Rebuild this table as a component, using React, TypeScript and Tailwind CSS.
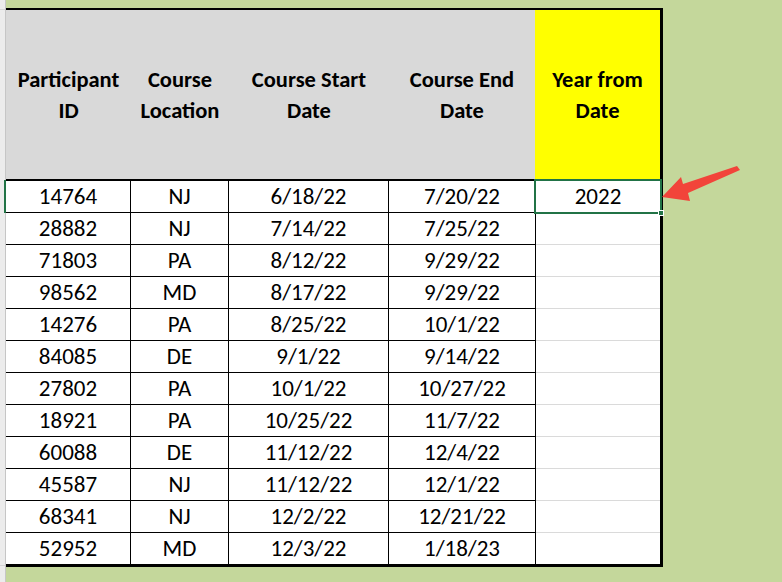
import React from 'react';

const rows: [string, string, string, string][] = [
  ['14764', 'NJ', '6/18/22', '7/20/22'],
  ['28882', 'NJ', '7/14/22', '7/25/22'],
  ['71803', 'PA', '8/12/22', '9/29/22'],
  ['98562', 'MD', '8/17/22', '9/29/22'],
  ['14276', 'PA', '8/25/22', '10/1/22'],
  ['84085', 'DE', '9/1/22', '9/14/22'],
  ['27802', 'PA', '10/1/22', '10/27/22'],
  ['18921', 'PA', '10/25/22', '11/7/22'],
  ['60088', 'DE', '11/12/22', '12/4/22'],
  ['45587', 'NJ', '11/12/22', '12/1/22'],
  ['68341', 'NJ', '12/2/22', '12/21/22'],
  ['52952', 'MD', '12/3/22', '1/18/23'],
];

const font = { fontFamily: 'Carlito, Lato, "Open Sans", sans-serif' };

export default function App() {
  return (
    <div
      className="relative flex h-[582px] w-[782px] overflow-hidden bg-[#c4d79b] text-black"
      style={font}
    >
      {/* excel row-header strip */}
      <div className="relative w-[6px] shrink-0 border-r border-[#c6c6c6] bg-[#ececec]">
        <div className="absolute left-0 top-[9px] h-px w-[5px] bg-[#d4d4d4]" />
        <div className="absolute left-[4px] top-[180px] h-[33px] w-[2px] bg-[#217346]" />
        <div className="absolute left-0 top-[565px] h-px w-[5px] bg-[#d4d4d4]" />
      </div>

      <div className="pt-[8px]">
        <div className="relative w-[657px] border-t-2 border-r-[3px] border-b-[3px] border-black bg-white">
          {/* header */}
          <div className="flex h-[171px] border-b-2 border-black text-[22.5px] font-bold leading-[31px]">
            <div className="flex w-[125px] items-center justify-center bg-[#d9d9d9] text-center">
              Participant<br />ID
            </div>
            <div className="flex w-[98px] items-center justify-center bg-[#d9d9d9] text-center">
              Course<br />Location
            </div>
            <div className="flex w-[160px] items-center justify-center bg-[#d9d9d9] text-center">
              Course Start<br />Date
            </div>
            <div className="flex w-[146px] items-center justify-center bg-[#d9d9d9] text-center">
              Course End<br />Date
            </div>
            <div className="flex w-[125px] items-center justify-center bg-[#ffff00] text-center">
              Year from<br />Date
            </div>
          </div>

          {/* body */}
          {rows.map((r, i) => {
            const last = i === rows.length - 1;
            return (
              <div key={i} className="flex text-[23px] leading-none">
                {r.map((v, j) => (
                  <div
                    key={j}
                    className={`flex items-center justify-center border-r border-black ${
                      last ? 'h-[31px]' : 'h-[32px] border-b'
                    } ${j === 0 ? 'w-[125px]' : j === 1 ? 'w-[98px]' : j === 2 ? 'w-[160px]' : 'w-[147px]'}`}
                  >
                    {v}
                  </div>
                ))}
                <div
                  className={`flex w-[124px] items-center justify-center ${
                    last ? 'h-[31px]' : 'h-[32px] border-b border-[#dadada]'
                  }`}
                >
                  {i === 0 ? '2022' : ''}
                </div>
              </div>
            );
          })}

          {/* active cell */}
          <div className="pointer-events-none absolute left-[528px] top-[169px] h-[35px] w-[128px] border-2 border-[#217346]" />
          <div className="pointer-events-none absolute left-[652px] top-[200px] h-[6px] w-[6px] border border-white bg-[#217346]" />
        </div>
      </div>

      {/* annotation arrow */}
      <svg
        className="pointer-events-none absolute left-[660px] top-[160px]"
        width="90"
        height="50"
        viewBox="0 0 90 50"
      >
        <polygon
          points="2,37 21,17 23,24 77,6 80,10 28,33 30,41"
          fill="#f2443a"
        />
      </svg>
    </div>
  );
}
